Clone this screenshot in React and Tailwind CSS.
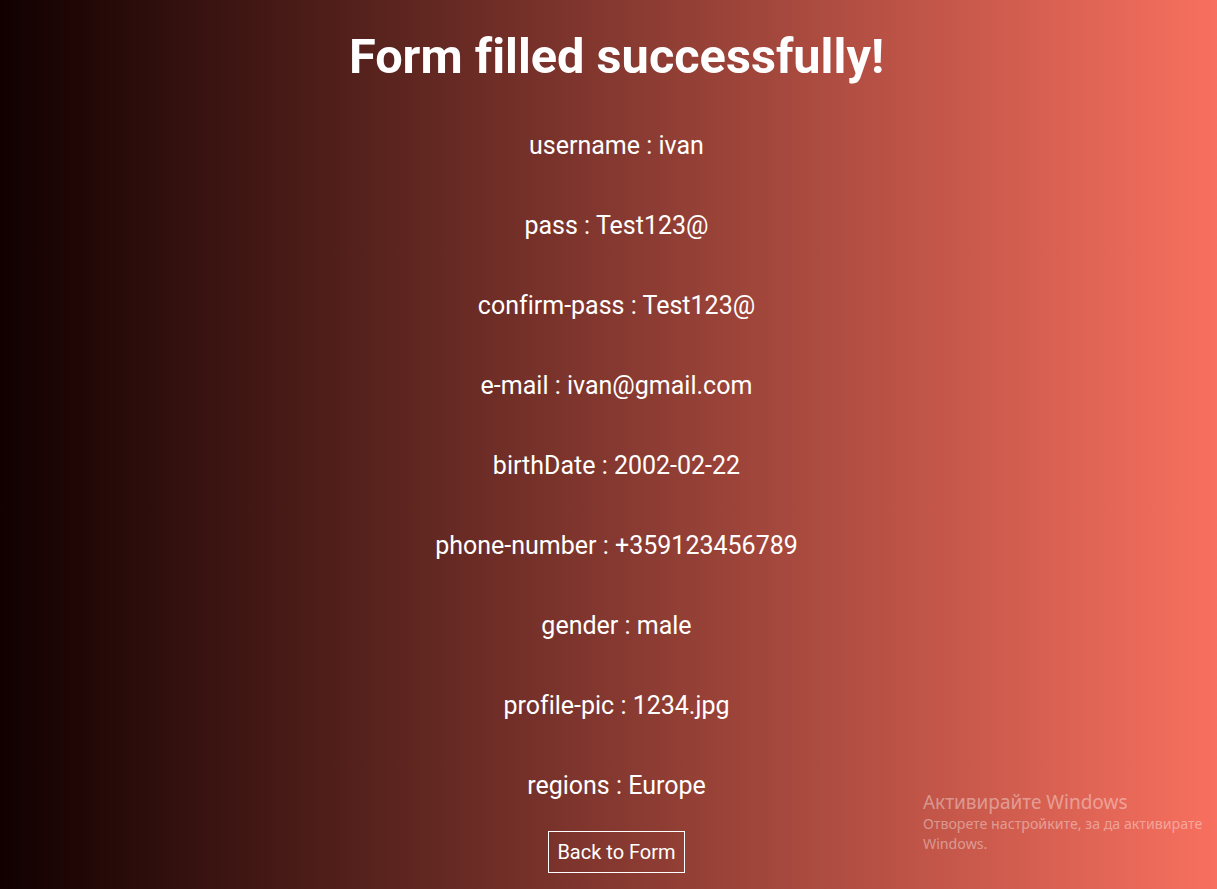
const fields = [
   ["username", "ivan"],
   ["pass", "Test123@"],
   ["confirm-pass", "Test123@"],
   ["e-mail", "ivan@gmail.com"],
   ["birthDate", "2002-02-22"],
   ["phone-number", "+359123456789"],
   ["gender", "male"],
   ["profile-pic", "1234.jpg"],
   ["regions", "Europe"],
];

const App = () => {
   return (
      <div className="relative min-h-[889px] w-full bg-[linear-gradient(to_right,#110000,#f8705f)] font-['Roboto',sans-serif] text-white [font-variant-ligatures:none]">
         <div className="flex flex-col items-center pl-4 pt-[29px]">
            <h1 className="text-[48.7px] leading-[56px] font-bold">
               Form filled successfully!
            </h1>
            <div className="mt-[47px] flex flex-col items-center gap-[52px]">
               {fields.map(([key, value]) => (
                  <p key={key} className="text-[25px] leading-7">
                     {key} : {value}
                  </p>
               ))}
            </div>
            <button className="mt-[31px] h-[42px] border border-white px-2 text-[20px] leading-6 text-white">
               Back to Form
            </button>
         </div>

         {/* windows watermark */}
         <div className="absolute left-[923px] top-[790px] font-['Noto_Sans',sans-serif] text-white/40">
            <p className="text-[19px] leading-6">Активирайте Windows</p>
            <p className="text-[14.2px] leading-5">
               Отворете настройките, за да активирате
               <br />
               Windows.
            </p>
         </div>
      </div>
   );
};

export default App;
